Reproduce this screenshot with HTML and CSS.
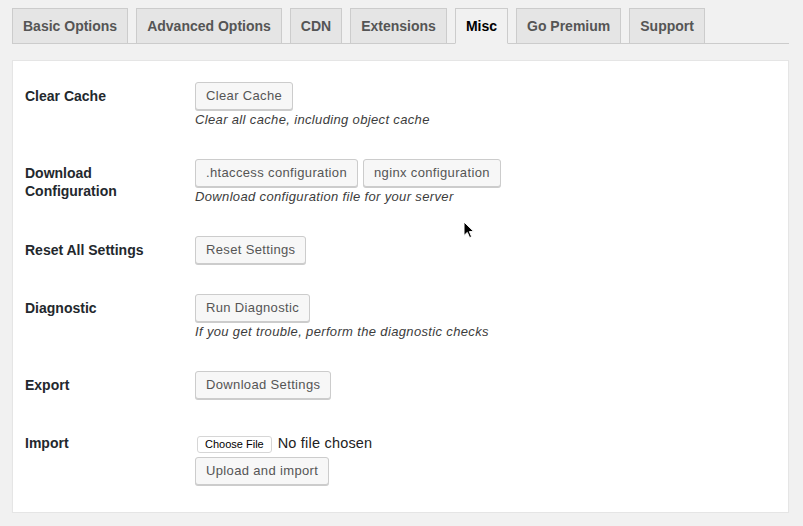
FILE: index.html
```html
<!DOCTYPE html>
<html lang="en">
<head>
<meta charset="utf-8">
<title>Misc</title>
<link rel="stylesheet" href="styles.css">
</head>
<body>
<div class="wrap">
  <nav class="tabs">
    <a class="tab">Basic Options</a>
    <a class="tab">Advanced Options</a>
    <a class="tab">CDN</a>
    <a class="tab">Extensions</a>
    <a class="tab tab-active">Misc</a>
    <a class="tab">Go Premium</a>
    <a class="tab">Support</a>
  </nav>
  <section class="panel">
    <div class="row">
      <div class="label">Clear Cache</div>
      <div class="field">
        <div class="btns"><span class="btn">Clear Cache</span></div>
        <p class="desc">Clear all cache, including object cache</p>
      </div>
    </div>
    <div class="row">
      <div class="label">Download Configuration</div>
      <div class="field">
        <div class="btns"><span class="btn">.htaccess configuration</span><span class="btn">nginx configuration</span></div>
        <p class="desc">Download configuration file for your server</p>
      </div>
    </div>
    <div class="row">
      <div class="label">Reset All Settings</div>
      <div class="field">
        <div class="btns"><span class="btn">Reset Settings</span></div>
      </div>
    </div>
    <div class="row">
      <div class="label">Diagnostic</div>
      <div class="field">
        <div class="btns"><span class="btn">Run Diagnostic</span></div>
        <p class="desc">If you get trouble, perform the diagnostic checks</p>
      </div>
    </div>
    <div class="row">
      <div class="label">Export</div>
      <div class="field">
        <div class="btns"><span class="btn">Download Settings</span></div>
      </div>
    </div>
    <div class="row">
      <div class="label">Import</div>
      <div class="field">
        <div class="file-line"><span class="file-btn">Choose File</span><span class="file-name">No file chosen</span></div>
        <div class="btns"><span class="btn">Upload and import</span></div>
      </div>
    </div>
  </section>
</div>
<svg class="cursor" width="12" height="18" viewBox="0 0 12 18" aria-hidden="true">
  <path d="M1 1 L1 14.5 L4.3 11.4 L6.6 16.6 L8.6 15.7 L6.4 10.6 L10.8 10.6 Z" fill="#000" stroke="#fff" stroke-width="1" stroke-linejoin="round"/>
</svg>
</body>
</html>
```
FILE: styles.css
```css
html, body {
  margin: 0;
  padding: 0;
  background: #f1f1f1;
  font-family: "Liberation Sans", Arial, sans-serif;
  color: #444;
}

.wrap {
  padding: 8px 14px 0 12px;
}

.tabs {
  display: flex;
  gap: 8px;
  border-bottom: 1px solid #ccc;
}

.tab {
  display: block;
  padding: 5px 10px;
  border: 1px solid #ccc;
  border-bottom: none;
  background: #e5e5e5;
  color: #555;
  font-size: 14px;
  font-weight: 700;
  line-height: 24px;
  white-space: nowrap;
}

.tab-active {
  background: #f1f1f1;
  color: #000;
  border-bottom: 1px solid #f1f1f1;
  margin-bottom: -1px;
}

.panel {
  margin-top: 16px;
  background: #fff;
  border: 1px solid #e5e5e5;
  box-shadow: 0 1px 1px rgba(0, 0, 0, 0.04);
  padding: 6px 12px 12px;
}

.row {
  display: flex;
  align-items: flex-start;
}

.label {
  width: 160px;
  flex: none;
  padding: 20px 10px 20px 0;
  font-size: 14px;
  font-weight: 700;
  line-height: 18.2px;
  color: #23282d;
}

.field {
  padding: 15px 0;
}

.btns {
  display: flex;
  gap: 5px;
}

.btn {
  display: block;
  height: 26px;
  line-height: 26px;
  padding: 0 10px;
  font-size: 13px;
  letter-spacing: 0.35px;
  color: #555;
  background: #f7f7f7;
  border: 1px solid #ccc;
  border-radius: 3px;
  box-shadow: 0 1px 0 #ccc;
  white-space: nowrap;
}

.desc {
  margin: 0;
  font-size: 13px;
  font-style: italic;
  line-height: 19px;
  letter-spacing: 0.35px;
  color: #3c3c3c;
}

.file-line {
  box-sizing: border-box;
  display: flex;
  align-items: center;
  height: 28px;
  padding-top: 3px;
  gap: 6px;
}

.file-btn {
  display: block;
  margin-left: 2px;
  height: 15px;
  line-height: 15px;
  padding: 0 7px;
  font-size: 11px;
  color: #000;
  background: #fff;
  border: 1px solid #d6d6d6;
  border-radius: 3px;
}

.file-name {
  font-size: 14.5px;
  letter-spacing: 0.2px;
  color: #222;
  margin-top: -3px;
}

.cursor {
  position: absolute;
  left: 463px;
  top: 221px;
}
```
